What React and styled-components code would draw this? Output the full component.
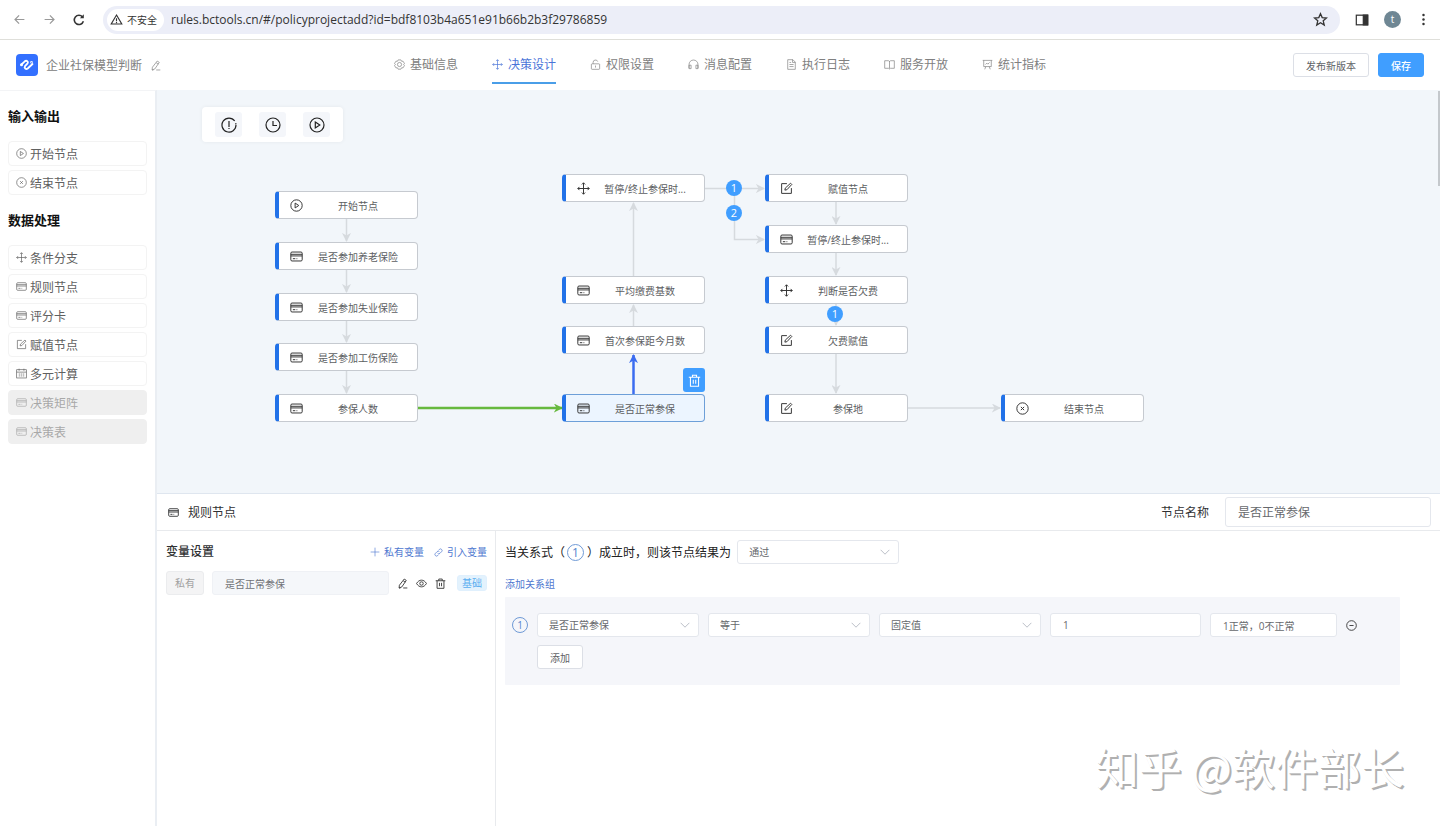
import React, { useState } from 'react'
import styled, { createGlobalStyle } from 'styled-components'

const GlobalStyle = createGlobalStyle`
  * {
    box-sizing: border-box;
  }
  body {
    margin: 0;
    background: #fff;
    color: #606266;
    font-family: 'Open Sans', 'Noto Sans CJK SC', sans-serif;
    font-size: 12px;
  }
  button, input, select {
    font-family: inherit;
    margin: 0;
  }
  button {
    cursor: pointer;
  }
`

/* ---------- icons ---------- */

const glyphs = {
  back: <path d="M14 8H2.5M7.5 3L2.5 8l5 5" />,
  forward: <path d="M2 8h11.500M8.500 3l5 5-5 5" />,
  reload: <><path d="M13 9.500A5.300 5.300 0 1 1 12 4.500" /><path d="M13.500 1.500v4.500H9z" fill="currentColor" stroke="none" /></>,
  warning: <><path d="M8 2.500L14.500 13.500h-13z" /><path d="M8 6.500v3.500M8 11v1.500" /></>,
  star: <path d="M8 1.800l1.800 4.200 4.600.4-3.500 3 1.100 4.500L8 11.500l-4 2.400 1.100-4.500-3.500-3 4.600-.4z" />,
  sidePanel: <><rect x="1.500" y="2.500" width="13" height="11" /><path d="M9.500 2.500h5v11h-5z" fill="currentColor" /></>,
  more: <g fill="currentColor" stroke="none"><circle cx="8" cy="2.500" r="1.500" /><circle cx="8" cy="8" r="1.500" /><circle cx="8" cy="13.500" r="1.500" /></g>,
  pen: <path d="M10.500 1.500l3 2-6.500 9.500-4 1.500.5-4zM9 4l3 2M3 14.500h2M9 14.500h6" />,
  setting: <><path d="M6 1.300h4l1 2 2.200-.1 2 3.400L14 8l1.200 1.500-2 3.400-2.200-.1-1 2H6l-1-2-2.200.1-2-3.400L2 8 .8 6.600l2-3.400 2.200.1z" /><circle cx="8" cy="8" r="3" /></>,
  rank: <path d="M8 1v14M1 8h14M6 3l2-2 2 2M6 13l2 2 2-2M3 6L1 8l2 2M13 6l2 2-2 2" />,
  unlock: <><rect x="2" y="7" width="12" height="8" rx="1" /><path d="M4.500 7V5a3.500 3.500 0 0 1 6.800-1.200M8 9.500v3" /></>,
  headset: <path d="M1.500 13.500V8a6.500 6.500 0 0 1 13 0v5.500M1.500 9h3v5h-3zM11.500 9h3v5h-3z" />,
  document: <path d="M2.500 1h7.500l3.500 3.500V15h-11zM9.500 1v4h4M5 5h2.500M5 8h6M5 11h6" />,
  book: <path d="M8 3v11M1 2.500h5.500L8 3.500l1.500-1H15v11H9.500L8 14.500l-1.500-1H1z" />,
  board: <path d="M1 2h14M2.500 2v9h11V2M5.500 11L4 15M10.500 11L12 15M5 8l2-2 1.500 1.500L11 5" />,
  play: <><circle cx="8" cy="8" r="7" /><path d="M6.300 5l4.500 3-4.500 3z" /></>,
  close: <><circle cx="8" cy="8" r="7" /><path d="M6 6l4 4M10 6l-4 4" /></>,
  minus: <><circle cx="8" cy="8" r="7" /><path d="M5 8h6" /></>,
  card: <><rect x="1" y="2.500" width="14" height="11" rx="1.500" /><path d="M1 5.300h14M1 7.300h14M3.500 10.700h3M8 10.700h1" /></>,
  edit: <path d="M8.500 2H2v12h12V7.500M6 10l.5-2.500 6.500-6 1.500 1.500-6 6.500z" />,
  calendar: <><rect x="1" y="2.500" width="14" height="12" /><path d="M1 6h14M4.500 1v3M11.500 1v3M4 8.800h2M7 8.800h2M10 8.800h2M4 11.500h2M7 11.500h2M10 11.500h2" /></>,
  alert: <><path d="M13.700 4A7 7 0 1 0 15 8M11 1.700l1.200.9M14.700 6.200l.3 1.300" /><path d="M8 4v6M8 11v1" /></>,
  clock: <><circle cx="8" cy="8" r="7" /><path d="M8 4v4.500h4" /></>,
  trash: <path d="M1 4h14M3 4v11h10V4M5.500 4V1.500h5V4M6.500 7v5M9.500 7v5" />,
  plus: <path d="M8 1v14M1 8h14" />,
  link: <path d="M6.500 9.500a2.800 2.800 0 0 0 4 0l3-3a2.800 2.800 0 0 0-4-4l-1.500 1.500M9.500 6.500a2.800 2.800 0 0 0-4 0l-3 3a2.800 2.800 0 0 0 4 4L8 12" />,
  eye: <><path d="M.8 8C4.500 1.500 11.500 1.500 15.200 8 11.500 14.500 4.500 14.500.8 8z" /><circle cx="8" cy="8" r="2.500" /></>,
  down: <path d="M1 4.500l7 7 7-7" />,
}

const Svg = styled.svg`
  display: block;
  flex: none;
  fill: none;
  stroke: currentColor;
`

function Icon({ name, size = 11, weight = 1 }) {
  return (
    <Svg width={size} height={size} viewBox="0 0 16 16" strokeWidth={weight} aria-hidden="true">
      {glyphs[name]}
    </Svg>
  )
}

/* ---------- browser bar ---------- */

const BrowserBar = styled.div`
  display: flex;
  align-items: center;
  height: 40px;
  padding: 0 2px 0 12px;
  border-bottom: 1px solid #dfdfda;
  color: #333;
`

const BarButton = styled.button`
  display: flex;
  align-items: center;
  justify-content: center;
  width: ${(p) => p.$width || 30}px;
  height: 28px;
  padding: 0;
  border: 0;
  background: none;
  color: ${(p) => (p.$muted ? '#999' : '#333')};
`

const Address = styled.div`
  display: flex;
  flex: 1;
  align-items: center;
  height: 28px;
  margin: 0 7px 0 17px;
  padding: 0 5px 0 4px;
  border-radius: 14px;
  background: #eceef8;
`

const Chip = styled.span`
  display: flex;
  align-items: center;
  gap: 4px;
  height: 22px;
  margin-right: 7px;
  padding: 0 7px 0 3px;
  border-radius: 11px;
  background: #fff;
  font-size: 10px;
`

const UrlInput = styled.input`
  flex: 1;
  min-width: 0;
  padding: 0;
  border: 0;
  outline: 0;
  background: none;
  color: #333;
  font-size: 12px;
`

const Avatar = styled.span`
  width: 17px;
  margin: 0 7px;
  border-radius: 50%;
  background: #6f8794;
  color: #fff;
  font-size: 10px;
  line-height: 17px;
  text-align: center;
`

/* ---------- page header ---------- */

const Page = styled.div`
  display: flex;
  flex-direction: column;
  min-height: 100vh;
`

const Header = styled.header`
  display: grid;
  grid-template-columns: 1fr auto 1fr;
  align-items: center;
  height: 50px;
  padding: 0 16px;
`

const Brand = styled.div`
  display: flex;
  align-items: center;
  gap: 8px;
  color: #808080;
`

const Logo = styled.svg`
  width: 22px;
  height: 22px;
  border-radius: 4px;
  background: #3370ff;
`

const Nav = styled.nav`
  display: flex;
  gap: 34px;
`

const NavItem = styled.a`
  display: flex;
  align-items: center;
  gap: 5px;
  height: 38px;
  border-bottom: 2px solid ${(p) => (p.$active ? '#4a9ee8' : 'transparent')};
  color: ${(p) => (p.$active ? '#4a74d8' : '#808080')};
  text-decoration: none;
`

const Actions = styled.div`
  display: flex;
  justify-content: flex-end;
  gap: 9px;
`

const Button = styled.button`
  height: 24px;
  padding: 0 12px;
  border: 1px solid ${(p) => (p.$primary ? '#409eff' : '#dcdfe6')};
  border-radius: 3px;
  background: ${(p) => (p.$primary ? '#409eff' : '#fff')};
  color: ${(p) => (p.$primary ? '#fff' : '#606266')};
  font-size: 10px;
  font-weight: ${(p) => (p.$primary ? 500 : 400)};
`

/* ---------- side bar ---------- */

const Main = styled.div`
  display: flex;
  flex: 1;
`

const Sidebar = styled.aside`
  flex: none;
  width: 157px;
  padding: 0 8px 16px;
  border-right: 2px solid #eaeef3;
  border-top: 1px solid #f3f4f6;
`

const GroupTitle = styled.h2`
  margin: 15px 0;
  color: #111;
  font-size: 13px;
  font-weight: 700;
  line-height: 20px;
`

const NodeList = styled.div`
  display: flex;
  flex-direction: column;
  gap: 4px;
`

const NodeType = styled.button`
  display: flex;
  align-items: center;
  gap: 3px;
  height: 25px;
  padding: 0 7px;
  border: 1px solid #f3f3f3;
  border-radius: 4px;
  background: #fff;
  color: #606060;
  font-size: 12px;

  &:disabled {
    border-color: #efefef;
    background: #efefef;
    color: #a8a8a8;
  }
`

/* ---------- flow canvas ---------- */

const Workspace = styled.div`
  display: flex;
  flex: 1;
  flex-direction: column;
  min-width: 0;
`

const Canvas = styled.section`
  position: relative;
  flex: 1;
  min-height: 400px;
  overflow: hidden;
  background: #f2f6fa;
`

const Tools = styled.div`
  position: absolute;
  left: 45px;
  top: 17px;
  display: flex;
  gap: 17px;
  padding: 5px 13px;
  border-radius: 4px;
  background: #fff;
  box-shadow: 0 0 4px rgba(0, 0, 0, 0.06);
`

const Tool = styled.button`
  display: flex;
  align-items: center;
  justify-content: center;
  width: 27px;
  height: 25px;
  padding: 0;
  border: 0;
  border-radius: 3px;
  background: #f4f6fa;
  color: #222;
`

const Edges = styled.svg`
  position: absolute;
  left: 0;
  top: 0;
  width: 100%;
  height: 100%;
  fill: none;
`

const Node = styled.div`
  position: absolute;
  left: ${(p) => p.$x}px;
  top: ${(p) => p.$y}px;
  display: flex;
  align-items: center;
  width: 143px;
  height: 28px;
  padding: 0 13px 0 11px;
  border: 1px solid ${(p) => (p.$selected ? '#6d9fd8' : '#c6cad0')};
  border-left: 4px solid #2272e8;
  border-radius: 4px;
  background: ${(p) => (p.$selected ? '#ecf5ff' : '#fff')};
  color: #333;
`

const NodeLabel = styled.span`
  flex: 1;
  margin-left: 9px;
  color: #5c5e62;
  font-size: 10px;
  text-align: center;
  white-space: nowrap;
`

const Badge = styled.span`
  position: absolute;
  left: ${(p) => p.$x}px;
  top: ${(p) => p.$y}px;
  width: 16px;
  height: 16px;
  border-radius: 50%;
  background: #409eff;
  color: #fff;
  font-size: 11px;
  line-height: 16px;
  text-align: center;
`

const RemoveNode = styled.button`
  position: absolute;
  left: 526px;
  top: 278px;
  display: flex;
  align-items: center;
  justify-content: center;
  width: 22px;
  height: 24px;
  padding: 0;
  border: 0;
  border-radius: 3px;
  background: #409eff;
  color: #fff;
`

const ScrollThumb = styled.div`
  position: absolute;
  right: 0;
  top: 1px;
  width: 2px;
  height: 95px;
  background: #c4c8cc;
`

/* ---------- node detail ---------- */

const Detail = styled.section`
  position: relative;
  display: flex;
  flex-direction: column;
  min-height: 333px;
`

const DetailHeader = styled.div`
  display: flex;
  align-items: center;
  height: 38px;
  padding: 0 9px 0 11px;
  border-top: 1px solid #dfe6ef;
  border-bottom: 1px solid #e8eaed;
  color: #303133;
`

const DetailTitle = styled.h3`
  flex: 1;
  margin: 0 0 0 9px;
  font-size: 12px;
  font-weight: 400;
`

const DetailBody = styled.div`
  display: flex;
  flex: 1;
`

const Variables = styled.div`
  flex: none;
  width: 339px;
  padding: 11px 8px 11px 9px;
  border-right: 1px solid #e8eaed;
`

const Rule = styled.div`
  flex: 1;
  min-width: 0;
  padding: 9px 40px 16px 9px;
`

const Row = styled.div`
  display: flex;
  align-items: center;
  gap: ${(p) => p.$gap || 9}px;
`

const SectionTitle = styled.h4`
  flex: 1;
  margin: 0;
  color: #303133;
  font-size: 12px;
  font-weight: 500;
  line-height: 20px;
`

const LinkButton = styled.button`
  display: flex;
  align-items: center;
  gap: 4px;
  padding: 0;
  border: 0;
  background: none;
  color: #4f78d0;
  font-size: 10px;
  line-height: 16px;
`

const VariableRow = styled(Row)`
  margin-top: 9px;
`

const Tag = styled.span`
  height: ${(p) => (p.$info ? 24 : 16)}px;
  margin-left: ${(p) => (p.$info ? 0 : 'auto')};
  padding: 0 ${(p) => (p.$info ? 8 : 4)}px;
  border: 1px solid ${(p) => (p.$info ? '#ebecee' : '#e0f0fd')};
  border-radius: 3px;
  background: ${(p) => (p.$info ? '#f4f4f5' : '#e3f2fd')};
  color: ${(p) => (p.$info ? '#a0a0a0' : '#5aaef0')};
  font-size: 10px;
  line-height: ${(p) => (p.$info ? 22 : 14)}px;
  white-space: nowrap;
`

const TextInput = styled.input`
  width: ${(p) => p.$width}px;
  min-width: 0;
  height: ${(p) => (p.$large ? 30 : 24)}px;
  padding: 0 12px;
  border: 1px solid ${(p) => (p.$filled ? '#eff1f5' : '#e4e7ed')};
  border-radius: 3px;
  outline: 0;
  background: ${(p) => (p.$filled ? '#f5f7fa' : '#fff')};
  color: ${(p) => (p.$filled ? '#707276' : '#66686c')};
  font-size: ${(p) => (p.$large ? 12 : 10)}px;
`

const NameLabel = styled.label`
  margin-right: 16px;
`

const IconButton = styled.button`
  padding: 0;
  border: 0;
  background: none;
  color: #333;
`

const Sentence = styled.div`
  display: flex;
  align-items: center;
  height: 24px;
  color: #222;
  white-space: nowrap;
`

const Ring = styled.span`
  width: ${(p) => p.$size}px;
  height: ${(p) => p.$size}px;
  margin: ${(p) => (p.$inline ? '0 3px 0 2px' : 0)};
  border: 1px solid #6f9ad6;
  border-radius: 50%;
  color: #5484cc;
  font-size: ${(p) => (p.$inline ? 12 : 10)}px;
  line-height: ${(p) => p.$size - 2}px;
  text-align: center;
`

const SelectBox = styled.span`
  position: relative;
  display: block;
  width: 162px;
  color: #b8bcc4;

  svg {
    position: absolute;
    right: 9px;
    top: 7px;
    pointer-events: none;
  }
`

const NativeSelect = styled.select`
  display: block;
  width: 100%;
  height: 24px;
  padding: 0 24px 0 11px;
  border: 1px solid #e4e7ed;
  border-radius: 3px;
  outline: 0;
  appearance: none;
  background: #fff;
  color: #66686c;
  font-size: 10px;
`

const AddGroup = styled.div`
  margin: 12px 0 5px;
`

const RelationGroup = styled.div`
  display: grid;
  gap: 8px;
  padding: 16px 7px;
  border-radius: 1px;
  background: #f5f6fa;
`

const AddRow = styled.div`
  padding-left: 25px;
`

const Watermark = styled.div`
  position: absolute;
  right: 36px;
  bottom: 30px;
  color: #fff;
  font-family: 'Noto Sans CJK SC', sans-serif;
  font-size: 43px;
  line-height: 60px;
  text-shadow: 2px 2px 0 #b0b0b0, 1px 1px 0 #b0b0b0;
  white-space: nowrap;
  pointer-events: none;
`

const navItems = [
  { icon: 'setting', label: '基础信息' },
  { icon: 'rank', label: '决策设计' },
  { icon: 'unlock', label: '权限设置' },
  { icon: 'headset', label: '消息配置' },
  { icon: 'document', label: '执行日志' },
  { icon: 'book', label: '服务开放' },
  { icon: 'board', label: '统计指标' },
]

const groups = [
  {
    title: '输入输出',
    items: [
      { icon: 'play', label: '开始节点' },
      { icon: 'close', label: '结束节点' },
    ],
  },
  {
    title: '数据处理',
    items: [
      { icon: 'rank', label: '条件分支' },
      { icon: 'card', label: '规则节点' },
      { icon: 'card', label: '评分卡' },
      { icon: 'edit', label: '赋值节点' },
      { icon: 'calendar', label: '多元计算' },
      { icon: 'card', label: '决策矩阵', disabled: true },
      { icon: 'card', label: '决策表', disabled: true },
    ],
  },
]

const nodes = [
  { x: 118, y: 101, icon: 'play', label: '开始节点' },
  { x: 118, y: 152, icon: 'card', label: '是否参加养老保险' },
  { x: 118, y: 203, icon: 'card', label: '是否参加失业保险' },
  { x: 118, y: 253, icon: 'card', label: '是否参加工伤保险' },
  { x: 118, y: 304, icon: 'card', label: '参保人数' },
  { x: 405, y: 84, icon: 'rank', label: '暂停/终止参保时...' },
  { x: 405, y: 186, icon: 'card', label: '平均缴费基数' },
  { x: 405, y: 236, icon: 'card', label: '首次参保距今月数' },
  { x: 405, y: 304, icon: 'card', label: '是否正常参保', selected: true },
  { x: 608, y: 84, icon: 'edit', label: '赋值节点' },
  { x: 608, y: 135, icon: 'card', label: '暂停/终止参保时...' },
  { x: 608, y: 186, icon: 'rank', label: '判断是否欠费' },
  { x: 608, y: 236, icon: 'edit', label: '欠费赋值' },
  { x: 608, y: 304, icon: 'edit', label: '参保地' },
  { x: 844, y: 304, icon: 'close', label: '结束节点' },
]

const edges = [
  { d: 'M189.500 129V151' },
  { d: 'M189.500 180V202' },
  { d: 'M189.500 231V252' },
  { d: 'M189.500 281V303' },
  { d: 'M476.500 186V113' },
  { d: 'M476.500 236V215' },
  { d: 'M548 98.500H607' },
  { d: 'M577.500 98.500V149.500H607' },
  { d: 'M679 112V134' },
  { d: 'M679 163V185' },
  { d: 'M679 214V235' },
  { d: 'M679 264V303' },
  { d: 'M751 318H843' },
  { d: 'M261 318H405', color: 'green' },
  { d: 'M476.500 304V265', color: 'blue' },
]

const edgeColors = { gray: '#d6dade', green: '#67b93e', blue: '#3b6cf0' }

const badges = [
  { x: 569, y: 90, text: '1' },
  { x: 569, y: 115, text: '2' },
  { x: 670, y: 216, text: '1' },
]

function Flow() {
  return (
    <Canvas>
      <Edges>
        <defs>
          {Object.keys(edgeColors).map((key) => (
            <marker key={key} id={'arrow-' + key} viewBox="0 0 10 10" refX="9" refY="5" markerWidth="9" markerHeight="9" markerUnits="userSpaceOnUse" orient="auto">
              <path d="M0 0L10 5L0 10L3 5z" fill={edgeColors[key]} />
            </marker>
          ))}
        </defs>
        {edges.map(({ d, color = 'gray' }) => (
          <path key={d} d={d} stroke={edgeColors[color]} strokeWidth={color === 'gray' ? 1.5 : 2.5} markerEnd={`url(#arrow-${color})`} />
        ))}
      </Edges>
      <Tools>
        <Tool aria-label="提示"><Icon name="alert" size={16} weight={1.2} /></Tool>
        <Tool aria-label="历史"><Icon name="clock" size={16} weight={1.2} /></Tool>
        <Tool aria-label="运行"><Icon name="play" size={16} weight={1.2} /></Tool>
      </Tools>
      {nodes.map((node, index) => (
        <Node key={index} $x={node.x} $y={node.y} $selected={node.selected}>
          <Icon name={node.icon} size={13} weight={1.2} />
          <NodeLabel>{node.label}</NodeLabel>
        </Node>
      ))}
      {badges.map((badge, index) => (
        <Badge key={index} $x={badge.x} $y={badge.y}>{badge.text}</Badge>
      ))}
      <RemoveNode aria-label="删除节点"><Icon name="trash" size={13} weight={1.3} /></RemoveNode>
      <ScrollThumb />
    </Canvas>
  )
}

function Select({ label, options }) {
  return (
    <SelectBox>
      <NativeSelect aria-label={label}>
        {options.map((option) => <option key={option}>{option}</option>)}
      </NativeSelect>
      <Icon name="down" size={10} weight={1.5} />
    </SelectBox>
  )
}

function NodeDetail() {
  const [name, setName] = useState('是否正常参保')

  return (
    <Detail>
      <DetailHeader>
        <Icon name="card" weight={1.3} />
        <DetailTitle>规则节点</DetailTitle>
        <NameLabel htmlFor="node-name">节点名称</NameLabel>
        <TextInput id="node-name" $large $width={206} value={name} onChange={(e) => setName(e.target.value)} />
      </DetailHeader>
      <DetailBody>
        <Variables>
          <Row $gap={10}>
            <SectionTitle>变量设置</SectionTitle>
            <LinkButton><Icon name="plus" size={10} /> 私有变量</LinkButton>
            <LinkButton><Icon name="link" size={9} weight={1.3} /> 引入变量</LinkButton>
          </Row>
          <VariableRow $gap={8}>
            <Tag $info>私有</Tag>
            <TextInput $filled $width={177} aria-label="变量名称" defaultValue="是否正常参保" />
            <IconButton aria-label="编辑"><Icon name="pen" weight={1.3} /></IconButton>
            <IconButton aria-label="查看"><Icon name="eye" weight={1.3} /></IconButton>
            <IconButton aria-label="删除"><Icon name="trash" weight={1.3} /></IconButton>
            <Tag>基础</Tag>
          </VariableRow>
        </Variables>
        <Rule>
          <Sentence>
            当关系式（<Ring $size={17} $inline>1</Ring>）成立时，则该节点结果为&nbsp;&nbsp;
            <Select label="节点结果" options={['通过', '不通过']} />
          </Sentence>
          <AddGroup>
            <LinkButton>添加关系组</LinkButton>
          </AddGroup>
          <RelationGroup>
            <Row>
              <Ring $size={16}>1</Ring>
              <Select label="变量" options={['是否正常参保']} />
              <Select label="关系" options={['等于', '不等于']} />
              <Select label="取值方式" options={['固定值', '变量']} />
              <TextInput $width={151} aria-label="取值" defaultValue="1" />
              <TextInput $width={127} aria-label="说明" defaultValue="1正常，0不正常" />
              <IconButton aria-label="移除"><Icon name="minus" weight={1.3} /></IconButton>
            </Row>
            <AddRow>
              <Button>添加</Button>
            </AddRow>
          </RelationGroup>
        </Rule>
      </DetailBody>
      <Watermark>知乎 @软件部长</Watermark>
    </Detail>
  )
}

export default function App() {
  const [active, setActive] = useState('决策设计')

  return (
    <Page>
      <GlobalStyle />
      <BrowserBar>
        <BarButton $muted aria-label="后退" $width={14}><Icon name="back" size={13} weight={1.5} /></BarButton>
        <BarButton $muted aria-label="前进" $width={46}><Icon name="forward" size={13} weight={1.5} /></BarButton>
        <BarButton aria-label="刷新" $width={14}><Icon name="reload" size={14} weight={1.8} /></BarButton>
        <Address>
          <Chip><Icon name="warning" size={13} weight={1.4} />不安全</Chip>
          <UrlInput aria-label="地址" defaultValue="rules.bctools.cn/#/policyprojectadd?id=bdf8103b4a651e91b66b2b3f29786859" />
          <BarButton aria-label="收藏"><Icon name="star" size={15} weight={1.4} /></BarButton>
        </Address>
        <BarButton aria-label="侧边栏"><Icon name="sidePanel" size={14} weight={1.4} /></BarButton>
        <Avatar>t</Avatar>
        <BarButton aria-label="更多"><Icon name="more" size={13} /></BarButton>
      </BrowserBar>
      <Header>
        <Brand>
          <Logo viewBox="0 0 22 22" fill="none" stroke="#fff" strokeWidth="1.800" strokeLinecap="round" strokeLinejoin="round">
            <path d="M5.500 10.500L8.800 7.300C10.500 6 12.800 7.500 11.600 9.300L9 12.200C7.800 14 10 15.800 11.700 14.500L16.500 10" />
            <circle cx="5.500" cy="10.800" r=".6" />
            <circle cx="15.500" cy="8.200" r=".4" />
          </Logo>
          企业社保模型判断
          <Icon name="pen" />
        </Brand>
        <Nav>
          {navItems.map((item) => (
            <NavItem key={item.label} href="#" $active={item.label === active} onClick={() => setActive(item.label)}>
              <Icon name={item.icon} />
              {item.label}
            </NavItem>
          ))}
        </Nav>
        <Actions>
          <Button>发布新版本</Button>
          <Button $primary>保存</Button>
        </Actions>
      </Header>
      <Main>
        <Sidebar>
          {groups.map((group) => (
            <div key={group.title}>
              <GroupTitle>{group.title}</GroupTitle>
              <NodeList>
                {group.items.map((item) => (
                  <NodeType key={item.label} disabled={item.disabled}>
                    <Icon name={item.icon} />
                    {item.label}
                  </NodeType>
                ))}
              </NodeList>
            </div>
          ))}
        </Sidebar>
        <Workspace>
          <Flow />
          <NodeDetail />
        </Workspace>
      </Main>
    </Page>
  )
}
